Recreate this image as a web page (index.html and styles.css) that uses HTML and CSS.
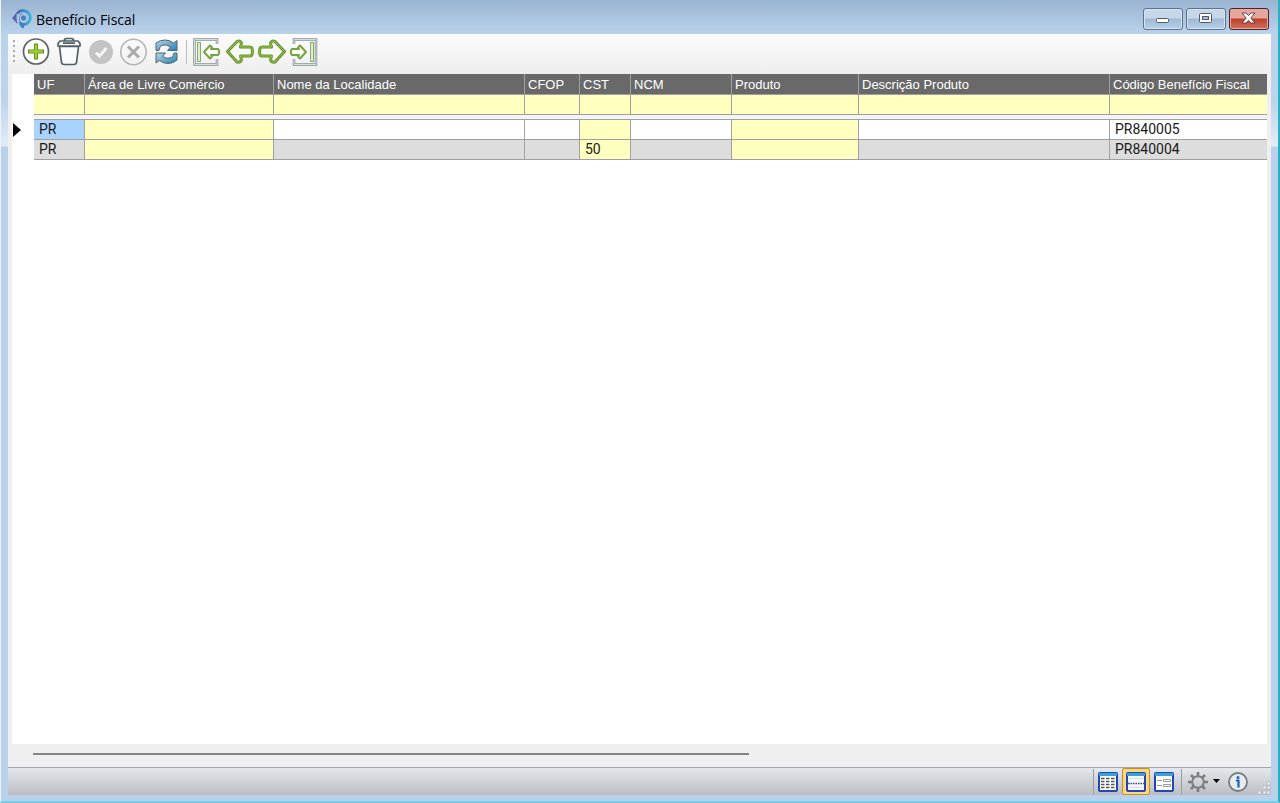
FILE: index.html
```html
<!DOCTYPE html>
<html lang="pt-BR">
<head>
  <meta charset="UTF-8">
  <meta name="viewport" content="width=device-width, initial-scale=1.0">
  <title>Benefício Fiscal</title>
  <link rel="stylesheet" href="styles.css">
</head>
<body>

<div class="window">
  <header class="titlebar">
    <svg class="logo" width="20" height="20" viewBox="0 0 20 20">
      <defs>
        <linearGradient id="logoFill" x1="0" y1="0" x2="1" y2="0">
          <stop offset="0" stop-color="#5560ae"/>
          <stop offset="1" stop-color="#35b4d8"/>
        </linearGradient>
      </defs>
      <path d="M5.500 4.500A7 7 0 1 1 11 15.500" fill="none" stroke="url(#logoFill)" stroke-width="2.800"/>
      <path d="M7.500 12V8Q8 5 11 5" fill="none" stroke="#6f9fd0" stroke-width="1"/>
      <path d="M7 12L13 15L11.500 19.500Q7 18 7 12Z" fill="#3f83c0"/>
      <path d="M5 3Q3.500 9 5.500 15L0 9Z" fill="#5964b0"/>
      <circle cx="11.500" cy="9" r="2.500" fill="#3f83c0"/>
    </svg>
    <h1 class="title">Benefício Fiscal</h1>
    <div class="window-buttons">
      <button class="win-btn" aria-label="Minimizar">
        <svg width="36" height="20" viewBox="0 0 36 20"><rect x="12.500" y="9.500" width="12" height="4" rx="1" fill="#fff" stroke="#555b66"/></svg>
      </button>
      <button class="win-btn" aria-label="Maximizar">
        <svg width="36" height="20" viewBox="0 0 36 20"><rect x="12.500" y="4.500" width="12" height="9" rx="1" fill="#fff" stroke="#555b66"/><rect x="15.500" y="7.500" width="6" height="3" fill="#a4bdd8" stroke="#555b66"/></svg>
      </button>
      <button class="win-btn close" aria-label="Fechar">
        <svg width="36" height="20" viewBox="0 0 36 20"><path d="M12 4H16L18.500 6.500L21 4H25L20.800 9L25 14H21L18.500 11.500L16 14H12L16.200 9Z" fill="#fff" stroke="#62424e" stroke-width="1"/></svg>
      </button>
    </div>
  </header>

  <main class="client">
    <div class="toolbar">
      <span class="handle"></span>
      <button class="tool" aria-label="Incluir">
        <svg width="32" height="32" viewBox="0 0 32 32" fill="none"><circle cx="16" cy="15.500" r="12.500" fill="#fff" stroke="#596365" stroke-width="1.700"/><path d="M16 7.500V23.500M8 15.500H24" stroke="#568822" stroke-width="4"/><path d="M16 8.500V22.500M9 15.500H23" stroke="#9bd02f" stroke-width="2.400"/></svg>
      </button>
      <button class="tool" aria-label="Excluir">
        <svg width="32" height="32" viewBox="0 0 32 32" fill="#f8fafb" stroke="#526066" stroke-width="1.700"><path d="M7.500 10.500L9.500 26.500Q10 28.500 12 28.500H22Q24 28.500 24.500 26.500L26.500 10.500Z"/><path d="M6 10V7.500L8 5H26L28 7.500V10Z"/><path d="M12.500 5V3.500L14 2.500H20L21.500 3.500V5M11 7.200H23" fill="none"/></svg>
      </button>
      <button class="tool" aria-label="Confirmar" disabled>
        <svg width="32" height="32" viewBox="0 0 32 32"><circle cx="17" cy="16" r="12" fill="#c3c3c3"/><path d="M12 16.500L15.500 20L22.500 12" fill="none" stroke="#f5f5f5" stroke-width="3"/></svg>
      </button>
      <button class="tool" aria-label="Cancelar" disabled>
        <svg width="32" height="32" viewBox="0 0 32 32" fill="none"><circle cx="17.500" cy="16" r="12.700" stroke="#b5b5b5" stroke-width="1.600"/><path d="M12 10.500L23 21.500M23 10.500L12 21.500" stroke="#aaa" stroke-width="3"/></svg>
      </button>
      <button class="tool" aria-label="Atualizar">
        <svg width="32" height="32" viewBox="0 0 32 32"><defs><linearGradient id="syncFill" x1="0" y1="0" x2="1" y2="1"><stop offset="0" stop-color="#b7d7e6"/><stop offset="1" stop-color="#2480b4"/></linearGradient></defs><path d="M8 14.500V7Q12 4 17 4Q22 4 25.500 7L29 4.500V14.500H19.500L22.500 11Q18 7.500 13.500 9.500Q11.500 11 11 14.500Z" fill="url(#syncFill)" stroke="#56646c"/><path d="M29 17V24Q25 27.500 20 27.500Q15 27.500 11.500 24.500L8 27V17H17.500L14.500 20.500Q19 23.500 23.500 21.500Q25.500 20 26 17Z" fill="url(#syncFill)" stroke="#56646c"/></svg>
      </button>
      <span class="tool-sep"></span>
      <button class="tool" aria-label="Primeiro registro">
        <svg width="32" height="32" viewBox="0 0 32 32" fill="none"><path d="M27 8V3.500H4.500V28.500H27V23" stroke="#899397" stroke-width="2.500"/><path d="M27 8V3.500H4.500V28.500H27V23" stroke="#d7dcde"/><rect x="7.500" y="6.500" width="3" height="19" fill="#d9efc6" stroke="#8aa775"/><path d="M14 16L20 9.500L22 11.500L21 13H28Q30.500 16 28 19H21L22 20.500L20 22.500Z" fill="#fafcf8" stroke="#76a440" stroke-width="2" stroke-linejoin="round"/></svg>
      </button>
      <button class="tool" aria-label="Registro anterior">
        <svg width="32" height="32" viewBox="0 0 32 32"><path d="M5.500 15.500L15 5.500Q18 4 19.500 7L18.500 11H28Q30.500 11 30.500 15.500Q30.500 20 28 20H18.500L19.500 24Q18 27 15 26Z" fill="#f8f8f8" stroke="#659329" stroke-width="3" stroke-linejoin="round"/><path d="M5.500 15.500L15 5.500Q18 4 19.500 7L18.500 11H28Q30.500 11 30.500 15.500Q30.500 20 28 20H18.500L19.500 24Q18 27 15 26Z" fill="none" stroke="#98c750" stroke-linejoin="round"/></svg>
      </button>
      <button class="tool" aria-label="Próximo registro">
        <svg width="32" height="32" viewBox="0 0 32 32"><path d="M30.500 15.500L21 5.500Q18 4 16.500 7L17.500 11H8Q5.500 11 5.500 15.500Q5.500 20 8 20H17.500L16.500 24Q18 27 21 26Z" fill="#f8f8f8" stroke="#659329" stroke-width="3" stroke-linejoin="round"/><path d="M30.500 15.500L21 5.500Q18 4 16.500 7L17.500 11H8Q5.500 11 5.500 15.500Q5.500 20 8 20H17.500L16.500 24Q18 27 21 26Z" fill="none" stroke="#98c750" stroke-linejoin="round"/></svg>
      </button>
      <button class="tool" aria-label="Último registro">
        <svg width="32" height="32" viewBox="0 0 32 32" fill="none"><path d="M8 8V3.500H30V28.500H8V23" stroke="#899397" stroke-width="2.500"/><path d="M8 8V3.500H30V28.500H8V23" stroke="#d7dcde"/><rect x="24.500" y="6.500" width="3" height="19" fill="#d9efc6" stroke="#8aa775"/><path d="M20 16L14 9.500L12 11.500L13 13H6Q3.500 16 6 19H13L12 20.500L14 22.500Z" fill="#fafcf8" stroke="#76a440" stroke-width="2" stroke-linejoin="round"/></svg>
      </button>
    </div>

    <div class="grid-area">
      <table class="grid">
        <colgroup>
          <col class="col-mark"><col class="col-uf"><col class="col-area"><col class="col-wide"><col class="col-cfop">
          <col class="col-cst"><col class="col-ncm"><col class="col-produto"><col class="col-wide"><col>
        </colgroup>
        <thead>
          <tr class="head">
            <td class="mark"></td>
            <th>UF</th>
            <th>Área de Livre Comércio</th>
            <th>Nome da Localidade</th>
            <th>CFOP</th>
            <th>CST</th>
            <th>NCM</th>
            <th>Produto</th>
            <th>Descrição Produto</th>
            <th>Código Benefício Fiscal</th>
          </tr>
          <tr class="filter">
            <td class="mark"></td>
            <td><input type="text" aria-label="Filtrar UF"></td>
            <td><input type="text" aria-label="Filtrar Área de Livre Comércio"></td>
            <td><input type="text" aria-label="Filtrar Nome da Localidade"></td>
            <td><input type="text" aria-label="Filtrar CFOP"></td>
            <td><input type="text" aria-label="Filtrar CST"></td>
            <td><input type="text" aria-label="Filtrar NCM"></td>
            <td><input type="text" aria-label="Filtrar Produto"></td>
            <td><input type="text" aria-label="Filtrar Descrição Produto"></td>
            <td><input type="text" aria-label="Filtrar Código Benefício Fiscal"></td>
          </tr>
          <tr class="split"><td class="mark"></td><td colspan="9"></td></tr>
        </thead>
        <tbody>
          <tr>
            <td class="mark"><svg class="pointer" width="8" height="14" viewBox="0 0 8 14"><path d="M0 0L8 7L0 14Z"/></svg></td>
            <td class="selected">PR</td>
            <td class="lookup"></td>
            <td></td>
            <td></td>
            <td class="lookup"></td>
            <td></td>
            <td class="lookup"></td>
            <td></td>
            <td>PR840005</td>
          </tr>
          <tr class="alt">
            <td class="mark"></td>
            <td>PR</td>
            <td class="lookup"></td>
            <td></td>
            <td></td>
            <td class="lookup">50</td>
            <td></td>
            <td class="lookup"></td>
            <td></td>
            <td>PR840004</td>
          </tr>
        </tbody>
      </table>
    </div>

    <div class="scroll-track"><div class="scroll-thumb"></div></div>

    <footer class="statusbar">
      <span class="status-sep"></span>
      <button class="view" aria-label="Modo tabela">
        <svg width="20" height="20" viewBox="0 0 20 20"><rect x="1" y="1" width="18" height="18" rx="1" fill="#fff" stroke="#2445b8" stroke-width="2"/><path d="M1 2.500H19" stroke="#35a2d8" stroke-width="3"/><path d="M3 6.500H17M3 9.500H17M3 12.500H17M3 15.500H17" stroke="#4d5756" stroke-width="1.500" stroke-dasharray="3.500 1.500"/></svg>
      </button>
      <button class="view active" aria-label="Modo dividido">
        <svg width="20" height="20" viewBox="0 0 20 20"><rect x="1" y="1" width="18" height="18" rx="1" fill="#f8f8f8" stroke="#2445b8" stroke-width="2"/><path d="M1 2.500H19" stroke="#35a2d8" stroke-width="3"/><path d="M3 6.500H17M3 15.500H17" stroke="#ddd"/><path d="M2 11.500H18" stroke="#2445b8" stroke-width="1.500" stroke-dasharray="1.500 1"/></svg>
      </button>
      <button class="view" aria-label="Modo formulário">
        <svg width="20" height="20" viewBox="0 0 20 20"><rect x="1" y="1" width="18" height="18" rx="1" fill="#fff" stroke="#2445b8" stroke-width="2"/><path d="M1 2.500H19" stroke="#35a2d8" stroke-width="3"/><path d="M3 8.500H8M3 13.500H8M9.500 7.500H16.500V9.500H9.500ZM9.500 12.500H16.500V14.500H9.500Z" fill="none" stroke="#999"/></svg>
      </button>
      <span class="status-sep"></span>
      <button class="settings" aria-label="Configurações">
        <svg width="32" height="20" viewBox="0 0 32 20" fill="none" stroke="#7d7d7d"><circle cx="10" cy="10" r="5.800" stroke-width="2"/><path d="M10 0V4M10 16V20M0 10H4M16 10H20M3 3L6 6M14 14L17 17M17 3L14 6M6 14L3 17" stroke-width="2.600"/><path d="M25 7H32L28.500 11Z" fill="#000" stroke="none"/></svg>
      </button>
      <button class="info" aria-label="Informações">
        <svg width="20" height="20" viewBox="0 0 20 20"><circle cx="10" cy="10" r="9" fill="#e8ebee" stroke="#777c82" stroke-width="1.800"/><circle cx="10" cy="5.500" r="1.500" fill="#1765c2"/><path d="M8 8.500H10.500V15.500" fill="none" stroke="#1765c2" stroke-width="2.200"/></svg>
      </button>
      <svg class="grip" width="14" height="14" viewBox="0 0 14 14"><path d="M10 1H13V4H10ZM6 5H9V8H6ZM10 5H13V8H10ZM1 10H4V13H1ZM6 10H9V13H6ZM10 10H13V13H10Z" fill="#f0f2f4" stroke="#a9adb2" stroke-width=".6"/></svg>
    </footer>
  </main>
</div>

</body>
</html>
```
FILE: styles.css
```css
* { box-sizing: border-box; }

body {
  margin: 0;
  font-family: Roboto, "Liberation Sans", sans-serif;
  font-size: 14px;
  color: #1a1a1a;
}

button {
  padding: 0;
  border: 0;
  background: none;
}

svg { display: block; }

.window {
  display: flex;
  flex-direction: column;
  min-height: 100vh;
  padding: 0 7px 6px;
  background: linear-gradient(#99b4d1 0, #bbd2eb 34px, #bcd3ec 100px, #e2ecf7 146px, #b9d1ea 147px);
  border-left: 1px solid #eef3f8;
  border-right: 2px solid #27b2c4;
  border-bottom: 2px solid #6fd0e6;
}

.titlebar {
  display: flex;
  align-items: center;
  height: 34px;
  padding: 4px 2px 0 4px;
}

.title {
  margin: 0 auto 0 4px;
  font-family: "Open Sans", "Noto Sans", sans-serif;
  font-size: 14px;
  font-weight: 400;
  color: #000;
}

.window-buttons {
  display: flex;
  gap: 3px;
}

.win-btn {
  width: 40px;
  height: 22px;
  border: 1px solid #5b738f;
  border-radius: 3px;
  background: linear-gradient(#c5d7e9 45%, #9db9d6 50%, #b9d0e7);
  box-shadow: inset 0 0 0 1px #d5e3f1;
}

.win-btn.close {
  border-color: #561f2b;
  background: linear-gradient(#e5a79c 45%, #bd3f2a 50%, #d1705b);
  box-shadow: inset 0 0 0 1px #e5aaa0;
}

.client {
  display: flex;
  flex: 1;
  flex-direction: column;
  background: #efefef;
}

.toolbar {
  display: flex;
  align-items: center;
  height: 40px;
  padding: 0 5px 4px;
  background: linear-gradient(#fcfcfc, #eee);
}

.handle {
  width: 2px;
  height: 24px;
  margin-right: 5px;
  background: repeating-linear-gradient(#aaa 0 2px, transparent 2px 5px);
}

.tool { width: 32px; }

.tool-sep {
  width: 1px;
  height: 24px;
  margin: 0 3px 0 6px;
  background: #bbb;
}

.grid-area {
  flex: 1;
  margin: 0 4px;
  overflow: hidden;
  background: #fff;
}

.grid {
  width: 100%;
  table-layout: fixed;
  border-collapse: separate;
  border-spacing: 0;
}

.col-mark { width: 22px; }
.col-uf, .col-cst { width: 51px; }
.col-area { width: 189px; }
.col-wide { width: 251px; }
.col-cfop { width: 55px; }
.col-ncm { width: 101px; }
.col-produto { width: 127px; }

.grid th,
.grid td {
  height: 20px;
  padding: 0 5px;
  border: solid #a0a0a0;
  border-width: 0 1px 1px 0;
  line-height: 18px;
  text-align: left;
  vertical-align: top;
  white-space: nowrap;
}

.grid th {
  height: 21px;
  padding: 1px 3px 0;
  background: #696969;
  font-family: "Liberation Sans", sans-serif;
  font-size: 13px;
  font-weight: 400;
  line-height: 19px;
  color: #fff;
}

.grid th:last-child,
.grid td:last-child {
  border-right: 0;
}

.grid .filter td {
  padding: 0;
  background: #ffffc0;
}

.filter input {
  display: block;
  width: 100%;
  height: 18px;
  padding: 0 3px;
  border: 0;
  background: transparent;
  font: inherit;
}

.grid .split td {
  height: 5px;
  padding: 0;
  background: #f4f4f4;
  line-height: 0;
}

.grid .alt td { background: #ddd; }
.grid .lookup,
.grid .alt .lookup { background: #ffffc0; }
.grid .selected { background: #a9d3ff; }

.grid .mark,
.grid .filter .mark,
.grid .split .mark,
.grid .alt .mark {
  padding: 0 1px;
  border: 0;
  background: #fff;
  vertical-align: middle;
}

.scroll-track {
  height: 23px;
  padding: 9px 25px 0;
}

.scroll-thumb {
  width: 59%;
  height: 2px;
  background: #858585;
}

.statusbar {
  display: flex;
  align-items: center;
  justify-content: flex-end;
  height: 28px;
  border-top: 1px solid #a2a6ad;
  background: linear-gradient(#e4e8ed, #bbbfc4);
}

.status-sep {
  width: 1px;
  height: 26px;
  background: #999da3;
}

.view {
  display: grid;
  place-items: center;
  width: 28px;
  height: 27px;
}

.view + .status-sep { margin-left: 3px; }

.view.active {
  border: 1px solid #c78a36;
  border-radius: 2px;
  background: #ffd978;
}

.settings { margin: 0 8px 0 6px; }

.grip {
  align-self: flex-end;
  margin-left: 9px;
}
```
